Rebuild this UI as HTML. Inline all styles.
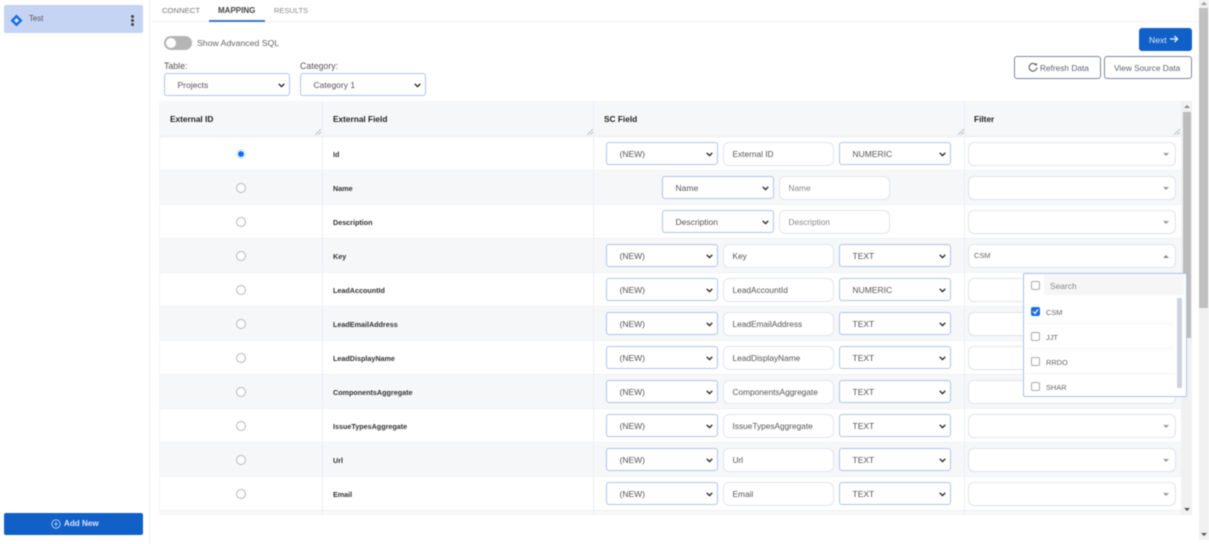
<!DOCTYPE html>
<html><head><meta charset="utf-8"><style>
*{box-sizing:border-box}
html,body{margin:0;padding:0;width:1209px;height:544px;overflow:hidden;background:#fff}
body{font-family:"Liberation Sans",sans-serif;color:#444;position:relative}
#p{position:absolute;inset:0;filter:blur(.45px)}
#p div,#p span.a{position:absolute}
.t{white-space:nowrap;line-height:12px;font-size:8.6px;color:#555}
.sel{height:23px;width:112px;background:#fff;border:1px solid #b0c4e8;border-radius:3px;font-size:8.5px;color:#555;line-height:22.4px;padding-left:12.5px;white-space:nowrap}
.sel svg{position:absolute;right:4px;top:8.5px}
.in{height:24px;width:111px;background:#fff;border:1px solid #e2e5ee;border-radius:6px;font-size:8.3px;color:#555;line-height:22.6px;padding-left:8.5px;white-space:nowrap}
.ph{color:#888}
.fl{left:968px;width:208px;height:24px;background:#fff;border:1px solid #e0e3ea;border-radius:6px}
.fl i{position:absolute;right:6px;top:10px;width:0;height:0;border-left:3px solid transparent;border-right:3px solid transparent;border-top:3px solid #999}
.r{width:10px;height:10px;border-radius:50%;border:1.2px solid #b5b5b5;left:236px;background:#fff}
.b{left:333px;font-weight:bold;font-size:7.2px;color:#333;line-height:12px;white-space:nowrap;margin-top:.6px}
.row{left:160px;width:1021px;height:34px;border-bottom:1px solid #eef0f4}
.g{background:#f6f7f9}
.h{font-weight:bold;font-size:8.3px;color:#222;top:113px;line-height:12px;white-space:nowrap}
.cb{left:1031px;width:9px;height:9px;border:1px solid #aaa;border-radius:2px;background:#fff}
.it{left:1046px;font-size:7.4px;color:#666;line-height:10px;margin-top:.6px}
.btn{height:23px;border:1px solid #7d8a9c;border-radius:3px;background:#fff;font-size:8.3px;color:#5a6472;line-height:22px;white-space:nowrap}
</style></head><body><div id="p">

<div style="left:149px;top:0;width:1px;height:544px;background:#eef0f4"></div>
<div style="left:4px;top:5px;width:139px;height:28px;background:#c6d4f3;border-radius:2px"></div>
<svg style="position:absolute;left:10px;top:14px" width="13" height="13" viewBox="0 0 13 13"><path d="M6.5 0.5L12.5 6.5L6.5 12.5L0.5 6.5Z" fill="#1a6fe0"/><rect x="4.7" y="4.7" width="3.6" height="3.6" transform="rotate(45 6.5 6.5)" fill="#dce6fa"/></svg>
<div class="t" style="left:29px;top:12.6px;font-size:7.8px;color:#555">Test</div>
<div style="left:131px;top:15px;width:3px;height:3px;border-radius:50%;background:#444"></div>
<div style="left:131px;top:19px;width:3px;height:3px;border-radius:50%;background:#444"></div>
<div style="left:131px;top:23px;width:3px;height:3px;border-radius:50%;background:#444"></div>
<div style="left:4px;top:513px;width:139px;height:22px;background:#1160c8;border-radius:2px"></div>
<svg style="position:absolute;left:51px;top:519px" width="10" height="10" viewBox="0 0 10 10"><circle cx="5" cy="5" r="4.2" fill="none" stroke="#c9d8f5" stroke-width=".8"/><path d="M5 3V7M3 5H7" stroke="#c9d8f5" stroke-width=".8"/></svg>
<div class="t" style="left:64px;top:518px;font-size:8.1px;font-weight:bold;color:#dbe5f7">Add New</div>

<div class="t" style="left:162px;top:4.6px;font-size:7.7px;color:#777">CONNECT</div>
<div class="t" style="left:218px;top:4.6px;font-size:8px;color:#444;font-weight:bold">MAPPING</div>
<div class="t" style="left:274px;top:4.6px;font-size:7.5px;color:#888">RESULTS</div>
<div style="left:152px;top:21px;width:1047px;height:1px;background:#eef0f4"></div>
<div style="left:209px;top:20px;width:56px;height:2px;background:#3c78c8"></div>

<div style="left:164px;top:36px;width:28px;height:14px;border-radius:7px;background:#b5b5b5"></div>
<div style="left:166px;top:38px;width:10px;height:10px;border-radius:50%;background:#fff"></div>
<div class="t" style="left:197px;top:37px;font-size:8.7px;color:#666">Show Advanced SQL</div>
<div class="t" style="left:164px;top:60px;font-size:8.8px;color:#555">Table:</div>
<div class="t" style="left:300px;top:60px;font-size:8.8px;color:#555">Category:</div>
<div class="sel" style="left:164px;top:73px;width:126px"><svg width="7" height="5" viewBox="0 0 7 5"><path d="M.7.8L3.5 3.6L6.3.8" fill="none" stroke="#222" stroke-width="1.3"/></svg>Projects</div>
<div class="sel" style="left:300px;top:73px;width:126px"><svg width="7" height="5" viewBox="0 0 7 5"><path d="M.7.8L3.5 3.6L6.3.8" fill="none" stroke="#222" stroke-width="1.3"/></svg>Category 1</div>

<div style="left:1139px;top:28px;width:53px;height:23px;background:#1160c8;border-radius:3px"></div>
<div class="t" style="left:1149px;top:33.6px;font-size:8.6px;color:#dbe5f7">Next</div>
<svg style="position:absolute;left:1169px;top:34px" width="10" height="10" viewBox="0 0 10 10"><path d="M1 5H8.5M5.5 2L8.5 5L5.5 8" fill="none" stroke="#e8eefa" stroke-width="1.3"/></svg>
<div class="btn" style="left:1014px;top:56px;width:87px;padding-left:25px">Refresh Data</div>
<svg style="position:absolute;left:1027.5px;top:62px" width="10" height="10" viewBox="0 0 10 10"><path d="M8.2 3A3.9 3.9 0 1 0 8.9 5.4" fill="none" stroke="#555" stroke-width="1"/><path d="M8.8 .8V3.4H6.2Z" fill="#555"/></svg>
<div class="btn" style="left:1104px;top:56px;width:88px;padding-left:9px">View Source Data</div>

<!-- table -->
<div style="left:159px;top:101px;width:1033px;height:414px;background:#f6f7f9"></div>
<div style="left:159px;top:136px;width:1022px;height:1px;background:#e9ebf0"></div>
<div class="row" style="top:137px;background:#fff"></div>
<div class="row g" style="top:171px"></div>
<div class="row" style="top:205px;background:#fff"></div>
<div class="row g" style="top:239px"></div>
<div class="row" style="top:273px;background:#fff"></div>
<div class="row g" style="top:307px"></div>
<div class="row" style="top:341px;background:#fff"></div>
<div class="row g" style="top:375px"></div>
<div class="row" style="top:409px;background:#fff"></div>
<div class="row g" style="top:443px"></div>
<div class="row" style="top:477px;background:#fff"></div>
<div style="left:322px;top:101px;width:1px;height:414px;background:#eceef3"></div>
<div style="left:593px;top:101px;width:1px;height:414px;background:#eceef3"></div>
<div style="left:964px;top:101px;width:1px;height:414px;background:#eceef3"></div>
<div class="h" style="left:170px">External ID</div>
<div class="h" style="left:333px">External Field</div>
<div class="h" style="left:604px">SC Field</div>
<div class="h" style="left:974px">Filter</div>
<svg style="position:absolute;left:315px;top:129px" width="6" height="6"><path d="M0 6L6 0M3 6L6 3" stroke="#aaa" stroke-width=".7"/></svg>
<svg style="position:absolute;left:587px;top:129px" width="6" height="6"><path d="M0 6L6 0M3 6L6 3" stroke="#aaa" stroke-width=".7"/></svg>
<svg style="position:absolute;left:958px;top:129px" width="6" height="6"><path d="M0 6L6 0M3 6L6 3" stroke="#aaa" stroke-width=".7"/></svg>
<svg style="position:absolute;left:1174px;top:129px" width="6" height="6"><path d="M0 6L6 0M3 6L6 3" stroke="#aaa" stroke-width=".7"/></svg>

<!-- radios -->
<div class="r" style="top:149px;border:1.5px solid #cfe0fb"></div>
<div style="left:238px;top:151px;width:6px;height:6px;border-radius:50%;background:#0d6efd"></div>
<div class="r" style="top:183px"></div>
<div class="r" style="top:217px"></div>
<div class="r" style="top:251px"></div>
<div class="r" style="top:285px"></div>
<div class="r" style="top:319px"></div>
<div class="r" style="top:353px"></div>
<div class="r" style="top:387px"></div>
<div class="r" style="top:421px"></div>
<div class="r" style="top:455px"></div>
<div class="r" style="top:489px"></div>

<!-- field names -->
<div class="b" style="top:148px">Id</div>
<div class="b" style="top:182px">Name</div>
<div class="b" style="top:216px">Description</div>
<div class="b" style="top:250px">Key</div>
<div class="b" style="top:284px">LeadAccountId</div>
<div class="b" style="top:318px">LeadEmailAddress</div>
<div class="b" style="top:352px">LeadDisplayName</div>
<div class="b" style="top:386px">ComponentsAggregate</div>
<div class="b" style="top:420px">IssueTypesAggregate</div>
<div class="b" style="top:454px">Url</div>
<div class="b" style="top:488px">Email</div>

<!-- row controls -->
<div class="sel" style="left:606px;top:142px"><svg width="7" height="5" viewBox="0 0 7 5"><path d="M.7.8L3.5 3.6L6.3.8" fill="none" stroke="#222" stroke-width="1.3"/></svg>(NEW)</div>
<div class="in" style="left:723px;top:142px">External ID</div>
<div class="sel" style="left:839px;top:142px"><svg width="7" height="5" viewBox="0 0 7 5"><path d="M.7.8L3.5 3.6L6.3.8" fill="none" stroke="#222" stroke-width="1.3"/></svg>NUMERIC</div>

<div class="sel" style="left:662px;top:176px"><svg width="7" height="5" viewBox="0 0 7 5"><path d="M.7.8L3.5 3.6L6.3.8" fill="none" stroke="#222" stroke-width="1.3"/></svg>Name</div>
<div class="in ph" style="left:779px;top:176px">Name</div>

<div class="sel" style="left:662px;top:210px"><svg width="7" height="5" viewBox="0 0 7 5"><path d="M.7.8L3.5 3.6L6.3.8" fill="none" stroke="#222" stroke-width="1.3"/></svg>Description</div>
<div class="in ph" style="left:779px;top:210px">Description</div>

<div class="sel" style="left:606px;top:244px"><svg width="7" height="5" viewBox="0 0 7 5"><path d="M.7.8L3.5 3.6L6.3.8" fill="none" stroke="#222" stroke-width="1.3"/></svg>(NEW)</div>
<div class="in" style="left:723px;top:244px">Key</div>
<div class="sel" style="left:839px;top:244px"><svg width="7" height="5" viewBox="0 0 7 5"><path d="M.7.8L3.5 3.6L6.3.8" fill="none" stroke="#222" stroke-width="1.3"/></svg>TEXT</div>

<div class="sel" style="left:606px;top:278px"><svg width="7" height="5" viewBox="0 0 7 5"><path d="M.7.8L3.5 3.6L6.3.8" fill="none" stroke="#222" stroke-width="1.3"/></svg>(NEW)</div>
<div class="in" style="left:723px;top:278px">LeadAccountId</div>
<div class="sel" style="left:839px;top:278px"><svg width="7" height="5" viewBox="0 0 7 5"><path d="M.7.8L3.5 3.6L6.3.8" fill="none" stroke="#222" stroke-width="1.3"/></svg>NUMERIC</div>

<div class="sel" style="left:606px;top:312px"><svg width="7" height="5" viewBox="0 0 7 5"><path d="M.7.8L3.5 3.6L6.3.8" fill="none" stroke="#222" stroke-width="1.3"/></svg>(NEW)</div>
<div class="in" style="left:723px;top:312px">LeadEmailAddress</div>
<div class="sel" style="left:839px;top:312px"><svg width="7" height="5" viewBox="0 0 7 5"><path d="M.7.8L3.5 3.6L6.3.8" fill="none" stroke="#222" stroke-width="1.3"/></svg>TEXT</div>

<div class="sel" style="left:606px;top:346px"><svg width="7" height="5" viewBox="0 0 7 5"><path d="M.7.8L3.5 3.6L6.3.8" fill="none" stroke="#222" stroke-width="1.3"/></svg>(NEW)</div>
<div class="in" style="left:723px;top:346px">LeadDisplayName</div>
<div class="sel" style="left:839px;top:346px"><svg width="7" height="5" viewBox="0 0 7 5"><path d="M.7.8L3.5 3.6L6.3.8" fill="none" stroke="#222" stroke-width="1.3"/></svg>TEXT</div>

<div class="sel" style="left:606px;top:380px"><svg width="7" height="5" viewBox="0 0 7 5"><path d="M.7.8L3.5 3.6L6.3.8" fill="none" stroke="#222" stroke-width="1.3"/></svg>(NEW)</div>
<div class="in" style="left:723px;top:380px">ComponentsAggregate</div>
<div class="sel" style="left:839px;top:380px"><svg width="7" height="5" viewBox="0 0 7 5"><path d="M.7.8L3.5 3.6L6.3.8" fill="none" stroke="#222" stroke-width="1.3"/></svg>TEXT</div>

<div class="sel" style="left:606px;top:414px"><svg width="7" height="5" viewBox="0 0 7 5"><path d="M.7.8L3.5 3.6L6.3.8" fill="none" stroke="#222" stroke-width="1.3"/></svg>(NEW)</div>
<div class="in" style="left:723px;top:414px">IssueTypesAggregate</div>
<div class="sel" style="left:839px;top:414px"><svg width="7" height="5" viewBox="0 0 7 5"><path d="M.7.8L3.5 3.6L6.3.8" fill="none" stroke="#222" stroke-width="1.3"/></svg>TEXT</div>

<div class="sel" style="left:606px;top:448px"><svg width="7" height="5" viewBox="0 0 7 5"><path d="M.7.8L3.5 3.6L6.3.8" fill="none" stroke="#222" stroke-width="1.3"/></svg>(NEW)</div>
<div class="in" style="left:723px;top:448px">Url</div>
<div class="sel" style="left:839px;top:448px"><svg width="7" height="5" viewBox="0 0 7 5"><path d="M.7.8L3.5 3.6L6.3.8" fill="none" stroke="#222" stroke-width="1.3"/></svg>TEXT</div>

<div class="sel" style="left:606px;top:482px"><svg width="7" height="5" viewBox="0 0 7 5"><path d="M.7.8L3.5 3.6L6.3.8" fill="none" stroke="#222" stroke-width="1.3"/></svg>(NEW)</div>
<div class="in" style="left:723px;top:482px">Email</div>
<div class="sel" style="left:839px;top:482px"><svg width="7" height="5" viewBox="0 0 7 5"><path d="M.7.8L3.5 3.6L6.3.8" fill="none" stroke="#222" stroke-width="1.3"/></svg>TEXT</div>

<!-- filters -->
<div class="fl" style="top:142px"><i></i></div>
<div class="fl" style="top:176px"><i></i></div>
<div class="fl" style="top:210px"><i></i></div>
<div class="fl" style="top:244px"><i style="border-top:0;border-bottom:3px solid #888"></i></div>
<div class="t" style="left:974px;top:249.6px;font-size:7.4px;color:#666">CSM</div>
<div class="fl" style="top:278px"><i></i></div>
<div class="fl" style="top:312px"><i></i></div>
<div class="fl" style="top:346px"><i></i></div>
<div class="fl" style="top:380px"><i></i></div>
<div class="fl" style="top:414px"><i></i></div>
<div class="fl" style="top:448px"><i></i></div>
<div class="fl" style="top:482px"><i></i></div>

<!-- inner scrollbar -->
<div style="left:1181px;top:101px;width:11px;height:414px;background:#f1f1f1"></div>
<div style="left:1183px;top:112px;width:8px;height:226px;background:#bcbcbc"></div>
<div style="left:1184px;top:105px;width:0;height:0;border-left:3px solid transparent;border-right:3px solid transparent;border-bottom:3px solid #888"></div>
<div style="left:1184px;top:508px;width:0;height:0;border-left:3px solid transparent;border-right:3px solid transparent;border-top:3px solid #555"></div>

<!-- outer scrollbar -->
<div style="left:1199px;top:0;width:10px;height:540px;background:#f1f1f1"></div>
<div style="left:1199px;top:8px;width:9px;height:300px;background:#c0c0c0"></div>
<div style="left:1201px;top:2px;width:0;height:0;border-left:3px solid transparent;border-right:3px solid transparent;border-bottom:3px solid #999"></div>
<div style="left:1201px;top:533px;width:0;height:0;border-left:3px solid transparent;border-right:3px solid transparent;border-top:3px solid #555"></div>

<!-- dropdown -->
<div style="left:1023px;top:273px;width:164px;height:124px;background:#fff;border:1px solid #a9c3ec;border-radius:2px"></div>
<div style="left:1044px;top:275px;width:140px;height:20px;background:#f6f6f6"></div>
<div class="cb" style="top:281px"></div>
<div class="t" style="left:1050px;top:280px;font-size:8.4px;color:#888">Search</div>
<div style="left:1025px;top:323px;width:150px;height:1px;background:#f3f4f6"></div>
<div style="left:1025px;top:348px;width:150px;height:1px;background:#f3f4f6"></div>
<div style="left:1025px;top:373px;width:150px;height:1px;background:#f3f4f6"></div>
<div class="cb" style="top:307px;background:#1a6fe0;border-color:#1a6fe0"></div>
<svg style="position:absolute;left:1032px;top:308px" width="7" height="7" viewBox="0 0 7 7"><path d="M1 3.5L3 5.5L6 1.5" fill="none" stroke="#fff" stroke-width="1.2"/></svg>
<div class="it" style="top:307px">CSM</div>
<div class="cb" style="top:332px"></div>
<div class="it" style="top:332px">JJT</div>
<div class="cb" style="top:357px"></div>
<div class="it" style="top:357px">RRDO</div>
<div class="cb" style="top:382px"></div>
<div class="it" style="top:382px">SHAR</div>
<div style="left:1177px;top:298px;width:5px;height:90px;background:#cdd3dc"></div>

</div></body></html>
